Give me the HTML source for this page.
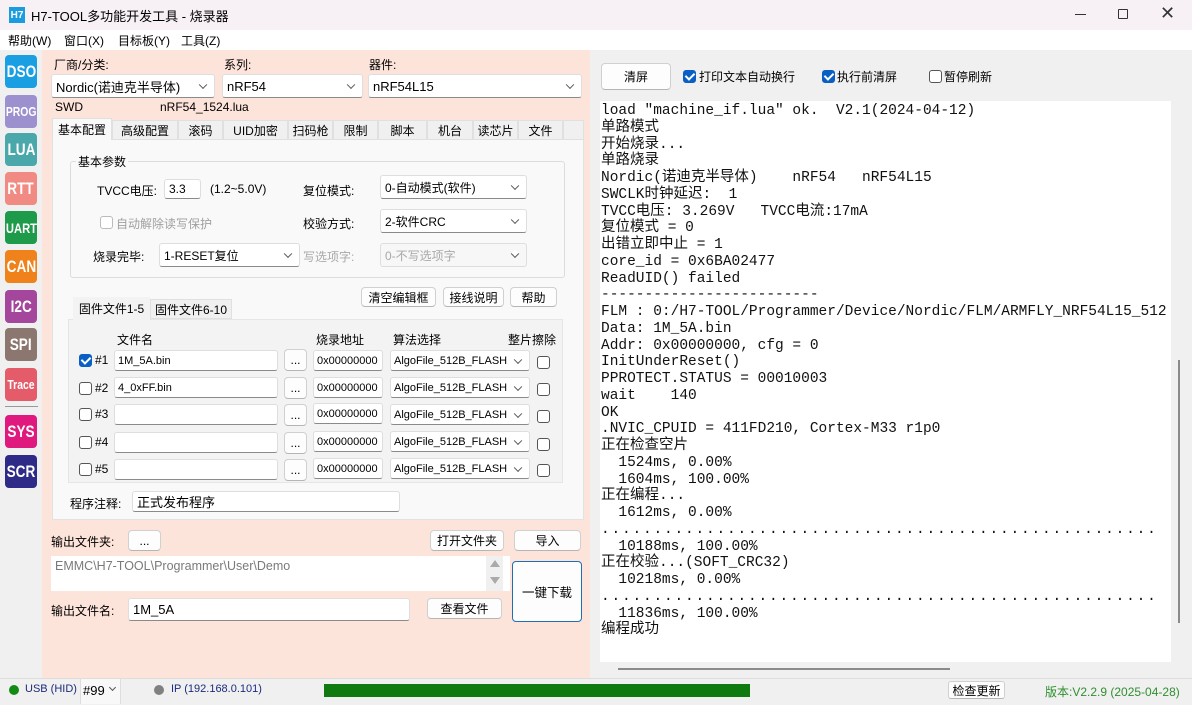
<!DOCTYPE html>
<html><head><meta charset="utf-8">
<style>
*{box-sizing:border-box;margin:0;padding:0}
body{width:1192px;height:705px;overflow:hidden;background:#f0f0f0;font-family:"Liberation Sans","Noto Sans CJK SC",sans-serif;font-size:12px;color:#000;position:relative}
.a{position:absolute}
.ic{position:absolute;left:5px;width:32px;height:33px;border-radius:4px;color:#fff;font-weight:bold;font-size:15px;display:flex;align-items:center;justify-content:center;overflow:hidden}
.ic span{display:inline-block;transform:scaleX(0.8);white-space:nowrap}
.in{position:absolute;background:#fff;border:1px solid #dedede;border-bottom:1px solid #8a8a8a;border-radius:3px;padding-left:4px;display:flex;align-items:center;font-size:12px;white-space:nowrap;overflow:hidden}
.sm{font-size:11px;padding-left:3px}
.sel::after{content:"";position:absolute;right:8px;top:50%;width:5px;height:5px;border-right:1px solid #555;border-bottom:1px solid #555;transform:translateY(-70%) rotate(45deg);background:#fff}
.btn{position:absolute;background:#fdfdfd;border:1px solid #d0d0d0;border-bottom-color:#b5b5b5;border-radius:4px;display:flex;align-items:center;justify-content:center;font-size:12px}
.cb{position:absolute;width:13px;height:13px;border:1px solid #555;border-radius:3px;background:#fff}
.cbk{background:#0a5fc4;border-color:#0a5fc4}
.cbk::after{content:"";position:absolute;left:3px;top:0px;width:4px;height:7px;border-right:2px solid #fff;border-bottom:2px solid #fff;transform:rotate(45deg)}
.tab{position:absolute;top:120px;height:20px;background:#f0f0f0;border:1px solid #e0e0e0;display:flex;align-items:center;justify-content:center;font-size:12px}
.log{position:absolute;left:601px;top:103px;width:570px;font-family:"Liberation Mono","Noto Sans CJK SC",monospace;font-size:14.5px;line-height:16.75px;white-space:pre;color:#111;overflow:hidden}
.dots{letter-spacing:1.8px}
</style></head><body>
<div class="a" style="left:0;top:0;width:1192px;height:30px;background:#f7f1f5"></div>
<div class="a" style="left:9px;top:7px;width:16px;height:16px;background:#1c9ce0;color:#fff;font-size:10px;font-weight:bold;display:flex;align-items:center;justify-content:center">H7</div>
<div class="a" style="left:31px;top:6px;font-size:13px">H7-TOOL多功能开发工具 - 烧录器</div>
<div class="a" style="left:1075px;top:14px;width:11px;height:1px;background:#333"></div>
<div class="a" style="left:1118px;top:9px;width:10px;height:10px;border:1px solid #333;border-radius:1px"></div>
<div class="a" style="left:1160px;top:3px;font-size:18px;color:#333">✕</div>
<div class="a" style="left:0;top:30px;width:1192px;height:20px;background:#fff"></div>
<div class="a" style="left:8px;top:32px">帮助(W)</div>
<div class="a" style="left:64px;top:32px">窗口(X)</div>
<div class="a" style="left:118px;top:32px">目标板(Y)</div>
<div class="a" style="left:181px;top:32px">工具(Z)</div>
<div class="ic" style="top:55px;background:#1a9fe2;font-size:17px"><span>DSO</span></div>
<div class="ic" style="top:95px;background:#9c90cf;font-size:13px"><span>PROG</span></div>
<div class="ic" style="top:133px;background:#4aa8ab;font-size:17px"><span>LUA</span></div>
<div class="ic" style="top:172px;background:#f18a82;font-size:17px"><span>RTT</span></div>
<div class="ic" style="top:211px;background:#1d9a4a;font-size:14px"><span>UART</span></div>
<div class="ic" style="top:250px;background:#f0821c;font-size:17px"><span>CAN</span></div>
<div class="ic" style="top:290px;background:#a3469c;font-size:17px"><span>I2C</span></div>
<div class="ic" style="top:328px;background:#8b7770;font-size:17px"><span>SPI</span></div>
<div class="ic" style="top:368px;background:#e45c6a;font-size:13px"><span>Trace</span></div>
<div class="a" style="left:5px;top:406px;width:33px;height:1px;background:#999"></div>
<div class="ic" style="top:415px;background:#e0197e;font-size:17px"><span>SYS</span></div>
<div class="ic" style="top:455px;background:#2e2a88;font-size:17px"><span>SCR</span></div>
<div class="a" style="left:42px;top:50px;width:548px;height:628px;background:#fde4db"></div>
<div class="a" style="left:54px;top:56px">厂商/分类:</div>
<div class="a" style="left:224px;top:56px">系列:</div>
<div class="a" style="left:369px;top:56px">器件:</div>
<div class="in sel" style="left:51px;top:74px;width:164px;height:24px;font-size:13px">Nordic(诺迪克半导体)</div>
<div class="in sel" style="left:222px;top:74px;width:141px;height:24px;font-size:13px">nRF54</div>
<div class="in sel" style="left:368px;top:74px;width:214px;height:24px;font-size:13px">nRF54L15</div>
<div class="a" style="left:55px;top:100px">SWD</div>
<div class="a" style="left:160px;top:100px">nRF54_1524.lua</div>
<div class="a" style="left:52px;top:139px;width:532px;height:381px;background:#f9f9f9;border:1px solid #e2e2e2"></div>
<div class="tab" style="left:52px;width:60px;top:118px;height:22px;background:#f9f9f9;border-bottom:none">基本配置</div>
<div class="tab" style="left:112px;width:66px">高级配置</div>
<div class="tab" style="left:178px;width:45px">滚码</div>
<div class="tab" style="left:223px;width:65px">UID加密</div>
<div class="tab" style="left:288px;width:45px">扫码枪</div>
<div class="tab" style="left:333px;width:45px">限制</div>
<div class="tab" style="left:378px;width:49px">脚本</div>
<div class="tab" style="left:427px;width:46px">机台</div>
<div class="tab" style="left:473px;width:45px">读芯片</div>
<div class="tab" style="left:518px;width:45px">文件</div>
<div class="a" style="left:563px;top:120px;width:21px;height:20px;background:#f0f0f0;border:1px solid #e0e0e0"></div>
<div class="a" style="left:70px;top:161px;width:495px;height:117px;border:1px solid #dcdcdc;border-radius:3px"></div>
<div class="a" style="left:76px;top:153px;background:#f9f9f9;padding:0 2px">基本参数</div>
<div class="a" style="left:97px;top:182px">TVCC电压:</div>
<div class="in" style="left:164px;top:179px;width:37px;height:20px">3.3</div>
<div class="a" style="left:210px;top:182px">(1.2~5.0V)</div>
<div class="a" style="left:303px;top:182px">复位模式:</div>
<div class="in sel" style="left:380px;top:175px;width:147px;height:24px">0-自动模式(软件)</div>
<div class="cb" style="left:100px;top:216px;border-color:#bbb"></div>
<div class="a" style="left:116px;top:215px;color:#a0a0a0">自动解除读写保护</div>
<div class="a" style="left:303px;top:215px">校验方式:</div>
<div class="in sel" style="left:380px;top:209px;width:147px;height:24px">2-软件CRC</div>
<div class="a" style="left:93px;top:248px">烧录完毕:</div>
<div class="in sel" style="left:159px;top:243px;width:141px;height:24px">1-RESET复位</div>
<div class="a" style="left:303px;top:248px;color:#a8a8a8">写选项字:</div>
<div class="in sel" style="left:380px;top:243px;width:147px;height:24px;color:#a8a8a8;background:#f7f7f7;border-bottom-color:#ddd">0-不写选项字</div>
<div class="btn" style="left:361px;top:287px;width:75px;height:20px">清空编辑框</div>
<div class="btn" style="left:443px;top:287px;width:61px;height:20px">接线说明</div>
<div class="btn" style="left:510px;top:287px;width:47px;height:20px">帮助</div>
<div class="a" style="left:68px;top:319px;width:495px;height:164px;background:#f3f3f3;border:1px solid #e6e6e6"></div>
<div class="a" style="left:73px;top:297px;width:77px;height:23px;background:#f3f3f3;display:flex;align-items:center;justify-content:center">固件文件1-5</div>
<div class="a" style="left:150px;top:299px;width:82px;height:20px;background:#f0f0f0;border:1px solid #e0e0e0;display:flex;align-items:center;justify-content:center">固件文件6-10</div>
<div class="a" style="left:117px;top:331px">文件名</div>
<div class="a" style="left:316px;top:331px">烧录地址</div>
<div class="a" style="left:393px;top:331px">算法选择</div>
<div class="a" style="left:508px;top:331px">整片擦除</div>

<div class="cb cbk" style="left:79px;top:354px"></div>
<div class="a" style="left:95px;top:353px">#1</div>
<div class="in sm" style="left:114px;top:350px;width:164px;height:21px">1M_5A.bin</div>
<div class="btn" style="left:284px;top:349px;width:23px;height:22px">...</div>
<div class="in sm" style="left:313px;top:350px;width:70px;height:21px">0x00000000</div>
<div class="in sel sm" style="left:390px;top:350px;width:140px;height:21px">AlgoFile_512B_FLASH</div>
<div class="cb" style="left:537px;top:356px"></div>

<div class="cb" style="left:79px;top:382px"></div>
<div class="a" style="left:95px;top:381px">#2</div>
<div class="in sm" style="left:114px;top:377px;width:164px;height:21px">4_0xFF.bin</div>
<div class="btn" style="left:284px;top:377px;width:23px;height:22px">...</div>
<div class="in sm" style="left:313px;top:377px;width:70px;height:21px">0x00000000</div>
<div class="in sel sm" style="left:390px;top:377px;width:140px;height:21px">AlgoFile_512B_FLASH</div>
<div class="cb" style="left:537px;top:383px"></div>

<div class="cb" style="left:79px;top:408px"></div>
<div class="a" style="left:95px;top:407px">#3</div>
<div class="in sm" style="left:114px;top:404px;width:164px;height:21px"></div>
<div class="btn" style="left:284px;top:404px;width:23px;height:22px">...</div>
<div class="in sm" style="left:313px;top:403px;width:70px;height:21px">0x00000000</div>
<div class="in sel sm" style="left:390px;top:404px;width:140px;height:21px">AlgoFile_512B_FLASH</div>
<div class="cb" style="left:537px;top:410px"></div>

<div class="cb" style="left:79px;top:436px"></div>
<div class="a" style="left:95px;top:435px">#4</div>
<div class="in sm" style="left:114px;top:432px;width:164px;height:21px"></div>
<div class="btn" style="left:284px;top:432px;width:23px;height:22px">...</div>
<div class="in sm" style="left:313px;top:431px;width:70px;height:21px">0x00000000</div>
<div class="in sel sm" style="left:390px;top:431px;width:140px;height:21px">AlgoFile_512B_FLASH</div>
<div class="cb" style="left:537px;top:438px"></div>

<div class="cb" style="left:79px;top:463px"></div>
<div class="a" style="left:95px;top:462px">#5</div>
<div class="in sm" style="left:114px;top:459px;width:164px;height:21px"></div>
<div class="btn" style="left:284px;top:459px;width:23px;height:22px">...</div>
<div class="in sm" style="left:313px;top:458px;width:70px;height:21px">0x00000000</div>
<div class="in sel sm" style="left:390px;top:458px;width:140px;height:21px">AlgoFile_512B_FLASH</div>
<div class="cb" style="left:537px;top:464px"></div>

<div class="a" style="left:70px;top:495px">程序注释:</div>
<div class="in" style="left:132px;top:491px;width:268px;height:21px;font-size:13px">正式发布程序</div>
<div class="a" style="left:51px;top:533px">输出文件夹:</div>
<div class="btn" style="left:128px;top:530px;width:33px;height:21px">...</div>
<div class="btn" style="left:430px;top:530px;width:74px;height:21px">打开文件夹</div>
<div class="btn" style="left:514px;top:530px;width:67px;height:21px">导入</div>
<div class="a" style="left:51px;top:556px;width:459px;height:35px;background:#fff"></div>
<div class="a" style="left:55px;top:559px;color:#7a7a7a;font-size:12.5px">EMMC\H7-TOOL\Programmer\User\Demo</div>
<div class="a" style="left:486px;top:556px;width:17px;height:35px;background:#f0f0f0"></div>
<div class="a" style="left:490px;top:560px;width:0;height:0;border-left:5px solid transparent;border-right:5px solid transparent;border-bottom:7px solid #aaa"></div>
<div class="a" style="left:490px;top:577px;width:0;height:0;border-left:5px solid transparent;border-right:5px solid transparent;border-top:7px solid #aaa"></div>
<div class="btn" style="left:512px;top:561px;width:70px;height:61px;border:1.5px solid #1f6fb5;font-size:12.5px">一键下载</div>
<div class="a" style="left:51px;top:602px">输出文件名:</div>
<div class="in" style="left:128px;top:598px;width:282px;height:23px;font-size:13px">1M_5A</div>
<div class="btn" style="left:427px;top:598px;width:75px;height:21px">查看文件</div>
<div class="btn" style="left:601px;top:63px;width:70px;height:27px">清屏</div>
<div class="cb cbk" style="left:683px;top:70px"></div>
<div class="a" style="left:699px;top:68px">打印文本自动换行</div>
<div class="cb cbk" style="left:822px;top:70px"></div>
<div class="a" style="left:837px;top:68px">执行前清屏</div>
<div class="cb" style="left:929px;top:70px"></div>
<div class="a" style="left:944px;top:68px">暂停刷新</div>
<div class="a" style="left:600px;top:101px;width:571px;height:561px;background:#fff"></div>
<div class="log">load "machine_if.lua" ok.  V2.1(2024-04-12)
单路模式
开始烧录...
单路烧录
Nordic(诺迪克半导体)    nRF54   nRF54L15
SWCLK时钟延迟:  1
TVCC电压: 3.269V   TVCC电流:17mA
复位模式 = 0
出错立即中止 = 1
core_id = 0x6BA02477
ReadUID() failed
-------------------------
FLM : 0:/H7-TOOL/Programmer/Device/Nordic/FLM/ARMFLY_NRF54L15_512
Data: 1M_5A.bin
Addr: 0x00000000, cfg = 0
InitUnderReset()
PPROTECT.STATUS = 00010003
wait    140
OK
.NVIC_CPUID = 411FD210, Cortex-M33 r1p0
正在检查空片
  1524ms, 0.00%
  1604ms, 100.00%
正在编程...
  1612ms, 0.00%
<span class="dots">.....................................................</span>
  10188ms, 100.00%
正在校验...(SOFT_CRC32)
  10218ms, 0.00%
<span class="dots">.....................................................</span>
  11836ms, 100.00%
编程成功</div>
<div class="a" style="left:1178px;top:360px;width:2px;height:263px;background:#8a8a8a"></div>
<div class="a" style="left:618px;top:668px;width:332px;height:2px;background:#8a8a8a"></div>
<div class="a" style="left:0;top:678px;width:1192px;height:27px;background:#f0f0f0;border-top:1px solid #ddd"></div>
<div class="a" style="left:9px;top:685px;width:10px;height:10px;border-radius:50%;background:#138a13"></div>
<div class="a" style="left:25px;top:683px;color:#1c2a7a;font-size:11px">USB (HID)</div>
<div class="a" style="left:80px;top:679px;width:41px;height:25px;background:#f8f8f8;border-left:1px solid #ddd;border-right:1px solid #ddd"></div>
<div class="a" style="left:83px;top:683px;font-size:13px">#99</div>
<div class="a" style="left:110px;top:685px;width:5px;height:5px;border-right:1px solid #555;border-bottom:1px solid #555;transform:rotate(45deg)"></div>
<div class="a" style="left:154px;top:685px;width:10px;height:10px;border-radius:50%;background:#808080"></div>
<div class="a" style="left:171px;top:683px;color:#1c2a7a;font-size:11px">IP (192.168.0.101)</div>
<div class="a" style="left:324px;top:684px;width:426px;height:13px;background:#0f7a0f"></div>
<div class="btn" style="left:948px;top:681px;width:57px;height:18px;border-radius:3px">检查更新</div>
<div class="a" style="left:1045px;top:683px;color:#2f8f2f;font-size:12px">版本:V2.2.9 (2025-04-28)</div>
</body></html>
